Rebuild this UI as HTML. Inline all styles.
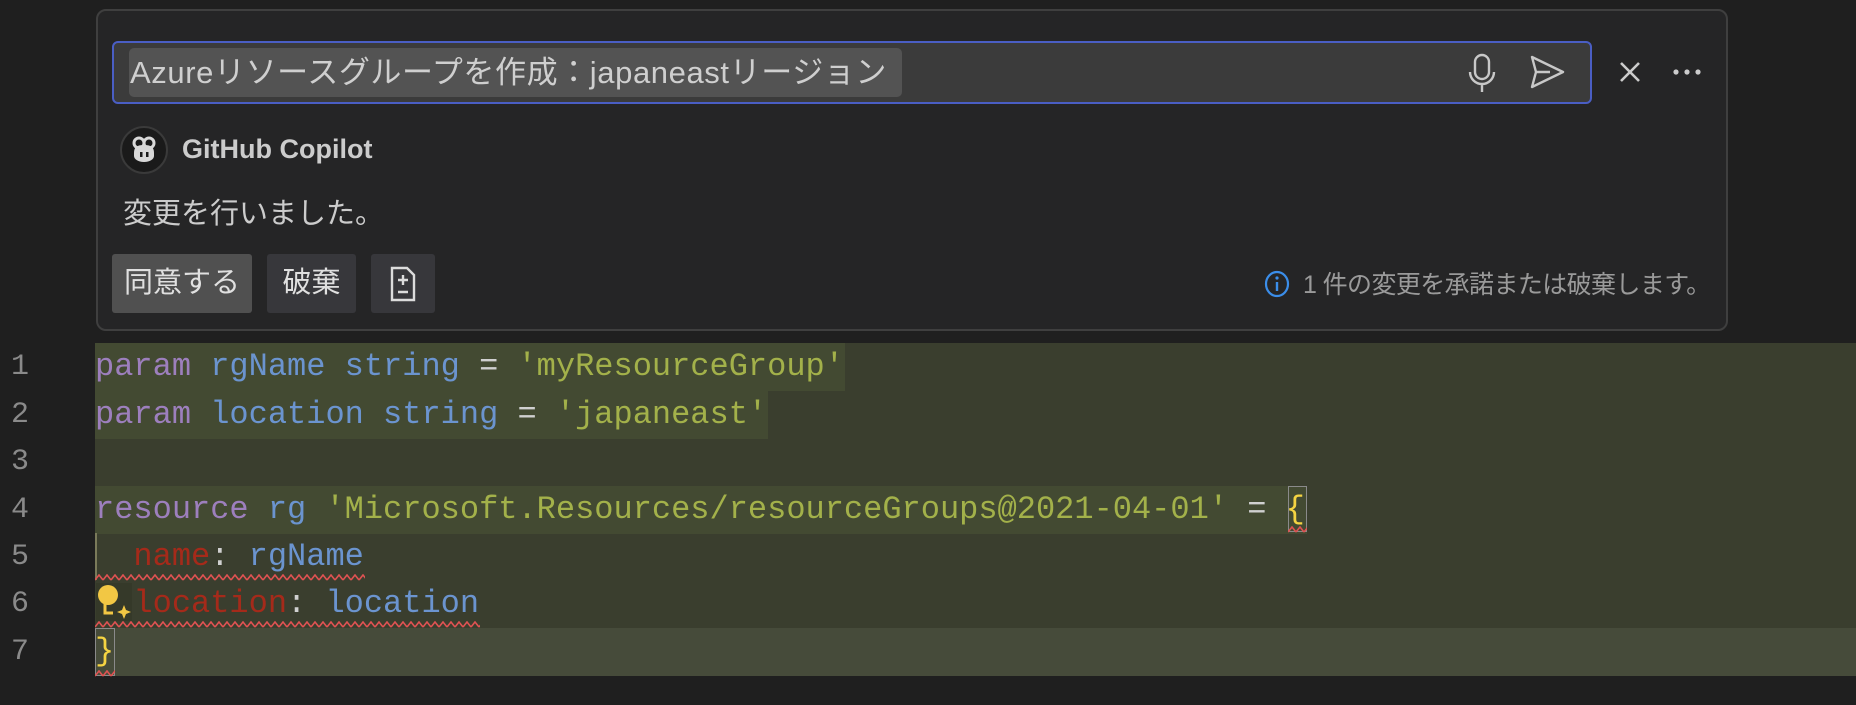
<!DOCTYPE html>
<html><head><meta charset="utf-8"><style>
*{margin:0;padding:0;box-sizing:border-box}
body{width:1856px;height:705px;background:#1f1f1f;position:relative;overflow:hidden;font-family:"Liberation Sans","Noto Sans CJK JP",sans-serif;color:#cccccc}
.abs{position:absolute}
.panel{left:96px;top:9px;width:1632px;height:322px;background:#252526;border:2px solid #3f3f3f;border-radius:10px}
.input{left:112px;top:41px;width:1480px;height:63px;background:#3b3b3b;border:2px solid #4a5ec4;border-radius:6px}
.sel{left:129px;top:48px;width:773px;height:49px;background:#535353;border-radius:5px;font-size:31px;line-height:49px;padding-left:1px;color:#cfcfcf;white-space:nowrap;letter-spacing:0.6px}
.btn{top:254px;height:59px;border-radius:3px;font-size:29px;line-height:59px;text-align:center;color:#e0e0e0}
.code{font-family:"Liberation Mono",monospace;font-size:32px;white-space:pre}
.row{left:95px;width:1761px;height:48px;background:#3a3e2e}
.hl{left:95px;height:48px;background:#434a32}
.ln{left:0;width:40px;text-align:center;font-family:"Liberation Mono",monospace;font-size:30px;color:#8a8a8a;line-height:48px}
.line{left:95px;line-height:48px;height:48px}
.k{color:#9d7fbd}.v{color:#6b94cf}.s{color:#a3b14a}.o{color:#d0d0d0}.p{color:#a52a1a}.y{color:#f5d442}
svg.sq{position:absolute;height:7px}
</style></head><body>
<svg width="0" height="0" style="position:absolute"><defs><pattern id="w" width="8" height="7" patternUnits="userSpaceOnUse"><path d="M0 6L4 1L8 6" fill="none" stroke="#e05252" stroke-width="1.6"/></pattern></defs></svg>
<div class="abs panel"></div>
<div class="abs input"></div>
<div class="abs sel">Azureリソースグループを作成：japaneastリージョン</div>
<svg class="abs" style="left:1466px;top:52px" width="32" height="42" viewBox="0 0 32 42" fill="none" stroke="#c8c8c8" stroke-width="2.4"><rect x="9" y="3" width="14" height="24" rx="7"/><path d="M4 20a12 12 0 0 0 24 0M16 32v8"/></svg>
<svg class="abs" style="left:1528px;top:54px" width="38" height="36" viewBox="0 0 38 36" fill="none" stroke="#c8c8c8" stroke-width="2.4" stroke-linejoin="round"><path d="M4 3L35 18L4 33L8 18Z M8 18H22"/></svg>
<svg class="abs" style="left:1618px;top:60px" width="24" height="24" viewBox="0 0 24 24" stroke="#cccccc" stroke-width="2.6"><path d="M3 3L21 21M21 3L3 21"/></svg>
<svg class="abs" style="left:1672px;top:68px" width="30" height="8"><circle cx="4" cy="4" r="2.6" fill="#ccc"/><circle cx="15" cy="4" r="2.6" fill="#ccc"/><circle cx="26" cy="4" r="2.6" fill="#ccc"/></svg>
<svg class="abs" style="left:119px;top:125px" width="50" height="50" viewBox="0 0 50 50"><circle cx="25" cy="25" r="23" fill="#1a1a1a" stroke="#3a3a3a" stroke-width="2"/><path d="M15 28c0-6 3-8 10-8s10 2 10 8v3c0 3-4 6-10 6s-10-3-10-6z" fill="#d8d8d8"/><circle cx="20" cy="18" r="5" fill="none" stroke="#d8d8d8" stroke-width="3"/><circle cx="30" cy="18" r="5" fill="none" stroke="#d8d8d8" stroke-width="3"/><rect x="21" y="27" width="2.5" height="5" fill="#1a1a1a"/><rect x="27" y="27" width="2.5" height="5" fill="#1a1a1a"/></svg>
<div class="abs" style="left:182px;top:131px;font-size:27px;font-weight:bold;color:#cccccc;line-height:36px">GitHub Copilot</div>
<div class="abs" style="left:123px;top:195px;font-size:29px;line-height:38px;color:#cccccc">変更を行いました。</div>
<div class="abs btn" style="left:112px;width:140px;background:#505050">同意する</div>
<div class="abs btn" style="left:267px;width:89px;background:#37373b">破棄</div>
<div class="abs btn" style="left:371px;width:64px;background:#37373b"></div>
<svg class="abs" style="left:389px;top:265px" width="28" height="38" viewBox="0 0 28 38" fill="none" stroke="#dcdcdc" stroke-width="2.4"><path d="M3 3H18L25 10V35H3Z M14 10V20M9 15H19M9 27H19"/></svg>
<svg class="abs" style="left:1264px;top:270px" width="26" height="28" viewBox="0 0 26 28"><ellipse cx="13" cy="14" rx="11" ry="12" fill="none" stroke="#3b8eea" stroke-width="2.2"/><rect x="11.8" y="12" width="2.4" height="9" fill="#3b8eea"/><circle cx="13" cy="8" r="1.6" fill="#3b8eea"/></svg>
<div class="abs" style="left:1303px;top:267px;font-size:25px;line-height:36px;color:#9a9a9a;white-space:nowrap;letter-spacing:-0.6px">1 件の変更を承諾または破棄します。</div>

<div class="abs row" style="top:343px;height:285px"></div>
<div class="abs row" style="top:628px;background:#464b3a"></div>
<div class="abs hl" style="top:343px;width:750px"></div>
<div class="abs hl" style="top:391px;width:673px"></div>
<div class="abs hl" style="top:486px;width:1212px"></div>
<div class="abs" style="left:95px;top:533px;width:2px;height:47px;background:#7a7a5a"></div>

<div class="abs ln" style="top:343px">1</div>
<div class="abs ln" style="top:391px">2</div>
<div class="abs ln" style="top:438px">3</div>
<div class="abs ln" style="top:486px">4</div>
<div class="abs ln" style="top:533px">5</div>
<div class="abs ln" style="top:580px">6</div>
<div class="abs ln" style="top:628px">7</div>

<div class="abs code line" style="top:343px"><span class="k">param</span> <span class="v">rgName</span> <span class="v">string</span> <span class="o">=</span> <span class="s">'myResourceGroup'</span></div>
<div class="abs code line" style="top:391px"><span class="k">param</span> <span class="v">location</span> <span class="v">string</span> <span class="o">=</span> <span class="s">'japaneast'</span></div>
<div class="abs code line" style="top:486px"><span class="k">resource</span> <span class="v">rg</span> <span class="s">'Microsoft.Resources/resourceGroups@2021-04-01'</span> <span class="o">=</span> <span class="y">{</span></div>
<div class="abs code line" style="top:533px">  <span class="p">name</span><span class="o">:</span> <span class="v">rgName</span></div>
<div class="abs code line" style="top:580px">  <span class="p">location</span><span class="o">:</span> <span class="v">location</span></div>
<div class="abs code line" style="top:628px"><span class="y">}</span></div>
<div class="abs" style="left:1288px;top:486px;width:19px;height:46px;border:1px solid #8a8a8a"></div>
<div class="abs" style="left:95px;top:628px;width:20px;height:48px;border:1px solid #8a8a8a"></div>
<svg class="sq" style="left:95px;top:574px" width="270"><rect width="270" height="7" fill="url(#w)"/></svg>
<svg class="sq" style="left:95px;top:621px" width="385"><rect width="385" height="7" fill="url(#w)"/></svg>
<svg class="sq" style="left:1288px;top:526px" width="19"><rect width="19" height="7" fill="url(#w)"/></svg>
<svg class="sq" style="left:95px;top:670px" width="20"><rect width="20" height="7" fill="url(#w)"/></svg>
<svg class="abs" style="left:96px;top:583px" width="38" height="38" viewBox="0 0 38 38"><rect width="36" height="38" fill="#353929"/><circle cx="12" cy="12" r="10" fill="#f2c744"/><path d="M9 20v10h8" stroke="#f2c744" stroke-width="3" fill="none"/><path d="M28 22l2 5 5 2-5 2-2 5-2-5-5-2 5-2z" fill="#f2c744"/></svg>
</body></html>
